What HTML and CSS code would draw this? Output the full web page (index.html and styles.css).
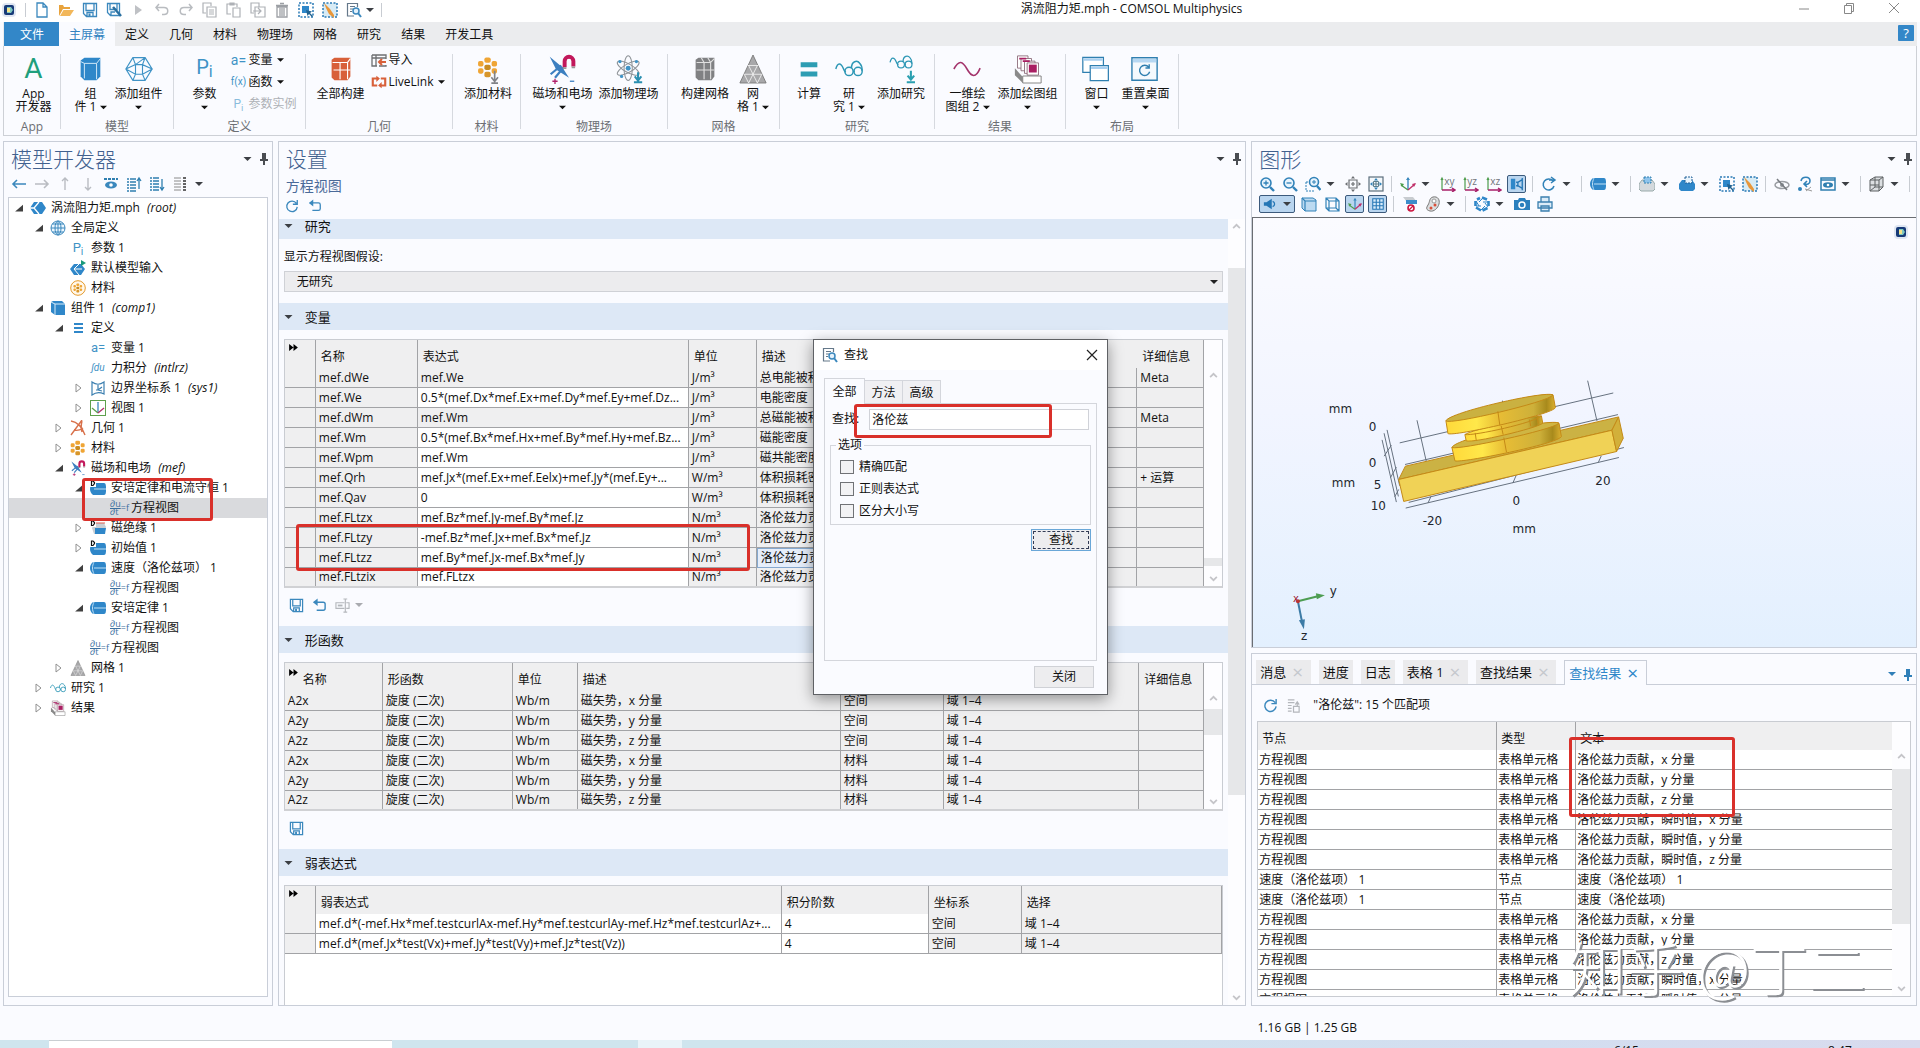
FILE: index.html
```html
<!DOCTYPE html>
<html lang="zh-CN">
<head>
<meta charset="utf-8">
<title>涡流阻力矩.mph - COMSOL Multiphysics</title>
<link rel="stylesheet" href="styles.css">
</head>
<body>
<svg class="sprite" aria-hidden="true">
  <symbol id="down" viewBox="0 0 8 8"><path d="M0 2h8L4 6z" fill="currentColor"/></symbol>
  <symbol id="pin" viewBox="0 0 8 12"><path d="M2 0h4v6h2v2H5v4H3V8H0V6h2z" fill="currentColor"/></symbol>
  <symbol id="chev-up" viewBox="0 0 8 8"><path d="M1 5.500l3-3 3 3" fill="none" stroke="#c4c4c8" stroke-width="1.500"/></symbol>
  <symbol id="chev-down" viewBox="0 0 8 8"><path d="M1 2.500l3 3 3-3" fill="none" stroke="#c4c4c8" stroke-width="1.500"/></symbol>
  <symbol id="open" viewBox="0 0 8 8"><path d="M8 1v6H1z" fill="#404040"/></symbol>
  <symbol id="shut" viewBox="0 0 8 10"><path d="M1.500 1v8L6.500 5z" fill="none" stroke="#909090"/></symbol>
  <symbol id="logo" viewBox="0 0 16 16"><rect x="1" y="1" width="14" height="14" rx="4" fill="#dfe6f2"/><rect x="3" y="3" width="10" height="10" rx="2" fill="#173a78"/><path d="M6 5h4l2 3-2 3H6z" fill="#7fc8c0"/><path d="M6 6h3v4H6z" fill="#f4e38a"/></symbol>
  <symbol id="new" viewBox="0 0 16 16"><path d="M3 1h6l4 4v10H3zM9 1v4h4" fill="none" stroke="#3b88bd" stroke-width="1.300"/></symbol>
  <symbol id="folder" viewBox="0 0 16 16"><path d="M1 14V3h4l1 2h6v2H5z" fill="#e8a33d"/><path d="M5.500 8H16l-4 6H2z" fill="#f2b75a"/></symbol>
  <symbol id="save" viewBox="0 0 16 16"><path d="M1.500 1.500h13v13h-10l-3-3zM4 1.500v7h8v-7M5 14v-3.500h6V14" fill="none" stroke="#3b88bd" stroke-width="1.300"/><path d="M6.500 11.500h2V14h-2z" fill="#3b88bd"/></symbol>
  <symbol id="saveas" viewBox="0 0 16 16"><path d="M1.500 1.500h12v12h-9l-3-3zM4 1.500v6h7v-6M5 13v-3h4" fill="none" stroke="#3b88bd" stroke-width="1.300"/><path d="M7 5l8 9" stroke="#2a6f9f" stroke-width="2.500"/></symbol>
  <symbol id="play" viewBox="0 0 16 16"><path d="M5 3v10l7-5z" fill="#bfc1c5"/></symbol>
  <symbol id="undo" viewBox="0 0 16 16"><path d="M5 2L2 5.500 5 9M2 5.500h8c5 0 5 7 0 7H8" fill="none" stroke="#b9bcc0" stroke-width="1.500"/></symbol>
  <symbol id="redo" viewBox="0 0 16 16"><path d="M11 2l3 3.500L11 9M14 5.500H6c-5 0-5 7 0 7h2" fill="none" stroke="#b9bcc0" stroke-width="1.500"/></symbol>
  <symbol id="copy" viewBox="0 0 16 16"><path d="M4 11H1V1h8v3M5 5h9v10H5zM7 8h5M7 10h5M7 12h5" fill="none" stroke="#aeb1b6" stroke-width="1.200"/></symbol>
  <symbol id="paste" viewBox="0 0 16 16"><path d="M5 12H1V2h10v3M4 1h4v2H4zM7 6h7v9H7z" fill="none" stroke="#aeb1b6" stroke-width="1.200"/></symbol>
  <symbol id="dup" viewBox="0 0 16 16"><path d="M4 11H1V1h8v4M5 5h10v10H5zM3 9h8M8 6l3 3-3 3" fill="none" stroke="#aeb1b6" stroke-width="1.200"/></symbol>
  <symbol id="trash" viewBox="0 0 16 16"><path d="M3 5h10v10H3zM2 3.500h12M6 1.500h4M6 6v8M8 6v8M10 6v8" fill="none" stroke="#9c9fa4" stroke-width="1.300"/></symbol>
  <symbol id="select" viewBox="0 0 16 16"><rect x="1" y="1" width="14" height="14" fill="none" stroke="#2a7ab5" stroke-width="1.500" stroke-dasharray="2 1.500"/><path d="M4 4h7v7H4z" fill="#2f87c9"/><path d="M8 8l6 1.500-2 1.500 3 3-1 1-3-3-1.500 2z" fill="#21628f"/></symbol>
  <symbol id="clear" viewBox="0 0 16 16"><rect x="1" y="1" width="14" height="14" fill="#d7ebf5" stroke="#2a7ab5" stroke-width="1.500" stroke-dasharray="2 1.500"/><path d="M2 1l6 6 4 6v3l-5-4-3-6z" fill="#e8973a"/></symbol>
  <symbol id="find" viewBox="0 0 16 16"><path d="M8 14H1.500V1.500h10V5M4 4.500h5M4 7h3M4 9.500h2" fill="none" stroke="#65788a" stroke-width="1.200"/><circle cx="10" cy="9" r="3" fill="#e4f1fb" stroke="#3b88bd" stroke-width="1.500"/><path d="M12 11l3 4" stroke="#3b88bd" stroke-width="2"/></symbol>
  <symbol id="cube" viewBox="0 0 28 32"><path d="M4 7l4-3h17v20l-4 4H8l-4-4z" fill="#2f87c9"/><path d="M4 8l4 2h13v17M21 10l4-5M8 10v16" fill="none" stroke="#d8ecfa" stroke-width="1"/></symbol>
  <symbol id="addcube" viewBox="0 0 32 32"><path d="M9 3h14l8 13-8 13H9L1 16zM1 16l11-5 11-8M9 3l3 8M12 11h8l11 5-11 6h-8L1 16M12 11v11L9 29M20 11v11l3 7M20 11l3-8" fill="none" stroke="#3f93c6" stroke-width="1.300"/></symbol>
  <symbol id="build" viewBox="0 0 28 32"><path d="M4 6l3-2h17v20l-3 4H7l-3-3z" fill="#d8603a"/><path d="M5 9h16v18M21 9l3-4M13 9v18M6 17h18" fill="none" stroke="#fff" stroke-width="1.200"/></symbol>
  <symbol id="meshcube" viewBox="0 0 28 32"><path d="M4 6l3-2h17v20l-3 4H7l-3-3z" fill="#808183"/><path d="M5 9h15v18M20 9l4-4M13 9v18M5 17h19M10 4l3 5M17 4l3 5" fill="none" stroke="#e0e0e0" stroke-width="1.200"/></symbol>
  <symbol id="mesh" viewBox="0 0 32 34"><path d="M16 1L31 33H1z" fill="#a8a8aa" stroke="#777"/><path d="M6 23h20M10 13h12M6 23l5 10M11 13l10 20M21 13L11 33M26 23l-5 10" stroke="#f0f0f0" fill="none"/></symbol>
  <symbol id="import" viewBox="0 0 16 16"><path d="M1 3h14v4M1 3v11h5M1 6h14M5 3v11M15 13v1H8" fill="none" stroke="#6d6f72" stroke-width="1.300"/><path d="M15 10H8m3-3l-3 3 3 3" fill="none" stroke="#d8603a" stroke-width="2"/></symbol>
  <symbol id="link" viewBox="0 0 18 14"><path d="M8 3H2v8h5M10 11h6V3h-5" fill="none" stroke="#d8603a" stroke-width="2.400"/><path d="M6 0l4 3-4 4zM12 7L8 11l4 3z" fill="#d8603a"/></symbol>
  <symbol id="mat" viewBox="0 0 24 24"><g fill="#efa535"><rect x="8" y="1" width="7" height="6" rx="2"/><rect x="1" y="5" width="6" height="6" rx="2"/><rect x="16" y="5" width="6" height="6" rx="2"/><rect x="8" y="9" width="7" height="6" rx="2" fill="#c98c22"/><rect x="1" y="13" width="6" height="6" rx="2"/><rect x="16" y="13" width="6" height="6" rx="2"/><rect x="8" y="17" width="7" height="6" rx="2" fill="#d8962a"/></g></symbol>
  <symbol id="matadd" viewBox="0 0 32 36"><use href="#mat" x="3" y="3" width="26" height="26"/><path d="M24 20v12m-4-4l4 5 4-5M20 35h8" fill="none" stroke="#808388" stroke-width="2"/></symbol>
  <symbol id="magnet" viewBox="0 0 32 34"><path d="M2 3l12 10 1 0 9 14-14-9-1-1z" fill="#3c7fc0"/><path d="M3 23l12-10M8 27l10-12" stroke="#3c7fc0" stroke-width="2.500"/><path d="M19 15V8a5 5 0 0 1 10 0v6" fill="none" stroke="#c2185b" stroke-width="4.500"/><path d="M17 15h4v2h-4zM27 14h4v2h-4z" fill="#999"/><path d="M5 31h6M8 28v6" stroke="#b0206a" stroke-width="1.500"/><path d="M25 31h5" stroke="#3c7fc0" stroke-width="1.500"/></symbol>
  <symbol id="atom" viewBox="0 0 34 36"><g fill="none" stroke="#8f9499" stroke-width="1.300"><ellipse cx="16" cy="17" rx="5" ry="15"/><ellipse cx="16" cy="17" rx="5" ry="15" transform="rotate(60 16 17)"/><ellipse cx="16" cy="17" rx="5" ry="15" transform="rotate(120 16 17)"/></g><circle cx="16" cy="17" r="3" fill="#3f93c6"/><circle cx="6" cy="9" r="2" fill="#3f93c6"/><circle cx="26" cy="9" r="2" fill="#3f93c6"/><circle cx="8" cy="27" r="2" fill="#3f93c6"/><path d="M28 22v9m-4-4l4 5 4-5M23 34h10" fill="none" stroke="#2a8fb0" stroke-width="2.500"/></symbol>
  <symbol id="equal" viewBox="0 0 24 24"><path d="M2 4h20v6H2zM2 15h20v6H2z" fill="#2d9db3"/></symbol>
  <symbol id="glasses" viewBox="0 0 34 24"><g fill="none" stroke="#2d97b5" stroke-width="1.800"><circle cx="17" cy="15" r="5"/><circle cx="28" cy="15" r="5"/><path d="M1 12c2-8 6-8 9-1 1 3 2 4 3 5M22 15h2M20 11c0-9 7-10 10-6 2 2 3 5 3 9"/></g></symbol>
  <symbol id="glassesadd" viewBox="0 0 34 36"><use href="#glasses" width="34" height="20"/><path d="M29 20v10m-4-4l4 5 4-5M24 34h10" fill="none" stroke="#2a9fb0" stroke-width="2.500"/></symbol>
  <symbol id="sine" viewBox="0 0 32 20"><path d="M1 10C7-1 11 1 16 10s10 11 15-1" fill="none" stroke="#a3336b" stroke-width="1.800"/></symbol>
  <symbol id="plots" viewBox="0 0 32 34"><g stroke="#8a6a78" fill="#fff"><path d="M4 2h12v14H4z"/><path d="M8 5h12v14H8z"/><path d="M12 8h12v14H12z"/><path d="M15 10h13v14H15z"/></g><path d="M17 12h9v9h-9z" fill="#a91e62"/><path d="M6 4h8v2H6zM10 7h8v2h-8z" fill="#a91e62"/><path d="M1 16l9 10v7L1 24z" fill="#8a8a8a"/><path d="M10 25h21v8H10z" fill="#fff" stroke="#777"/></symbol>
  <symbol id="wins" viewBox="0 0 34 32"><g fill="#fff" stroke="#2f7fb0" stroke-width="1.500"><path d="M1 2h25v18H1z"/><path d="M10 12h22v18H10z"/></g><path d="M2 3h23v3H2zM11 13h20v3H11z" fill="#a9d0f0"/></symbol>
  <symbol id="reset" viewBox="0 0 30 28"><path d="M1 2h27v24H1z" fill="#f4f9fd" stroke="#2f7fb0" stroke-width="1.500"/><path d="M2 3h25v4H2z" fill="#b5d7f2"/><path d="M19 12a5.500 5.500 0 1 0 1 5M19.500 9v4h-4" fill="none" stroke="#2f7fb0" stroke-width="1.500"/></symbol>
  <symbol id="left" viewBox="0 0 16 16"><path d="M15 8H2m4-4L2 8l4 4" fill="none" stroke="currentColor" stroke-width="1.600"/></symbol>
  <symbol id="right" viewBox="0 0 16 16"><path d="M1 8h13m-4-4l4 4-4 4" fill="none" stroke="currentColor" stroke-width="1.600"/></symbol>
  <symbol id="up" viewBox="0 0 16 16"><path d="M8 14V2M5 5l3-3 3 3" fill="none" stroke="currentColor" stroke-width="1.400"/></symbol>
  <symbol id="dn" viewBox="0 0 16 16"><path d="M8 2v12m-3-3l3 3 3-3" fill="none" stroke="currentColor" stroke-width="1.400"/></symbol>
  <symbol id="eye" viewBox="0 0 16 16"><path d="M1 3h14" stroke="#2f7fb0" stroke-width="2" stroke-dasharray="3 1"/><ellipse cx="8" cy="9" rx="6" ry="3.500" fill="#3b88bd"/><circle cx="8" cy="9" r="1.800" fill="#fff"/></symbol>
  <symbol id="listup" viewBox="0 0 16 16"><path d="M1 3h9M1 6h9M1 9h9M1 12h9M1 15h9" stroke="#2f7fb0" stroke-width="1.300" stroke-dasharray="2 1 6 0"/><path d="M13 13V2m-2 3l2-3 2 3" fill="none" stroke="#2f7fb0" stroke-width="1.300"/></symbol>
  <symbol id="listdn" viewBox="0 0 16 16"><path d="M1 2h9M1 5h9M1 8h9M1 11h9M1 14h9" stroke="#2f7fb0" stroke-width="1.300" stroke-dasharray="2 1 6 0"/><path d="M13 3v11m-2-3l2 3 2-3" fill="none" stroke="#2f7fb0" stroke-width="1.300"/></symbol>
  <symbol id="list" viewBox="0 0 16 16"><path d="M2 2h7M2 5h7M2 8h7M2 11h7M2 14h7" stroke="#8a8a8a"/><path d="M11 2h3M11 5h3M11 8h3M11 11h3M11 14h3" stroke="#333" stroke-width="1.500"/></symbol>
  <symbol id="root" viewBox="0 0 16 16"><path d="M4 2h8l4 6-4 6H4L0 8z" fill="#2f87c9"/><path d="M9 2L4 8l5 6M4 8h-4" stroke="#fff" stroke-width="1.300" fill="none"/></symbol>
  <symbol id="input" viewBox="0 0 16 16"><path d="M4 4h7l4 5-4 6H4L0 9z" fill="#2f87c9"/><path d="M9 4L4 9l5 6M4 9h8" stroke="#fff" fill="none"/><path d="M11 0l5 3-5 3z" fill="#1a9a7b"/></symbol>
  <symbol id="globe" viewBox="0 0 16 16"><g fill="#eaf5fd" stroke="#3b88bd"><circle cx="8" cy="8" r="7"/><ellipse cx="8" cy="8" rx="3" ry="7"/><path d="M1 8h14M8 1v14M2.500 4h11M2.500 12h11"/></g></symbol>
  <symbol id="matring" viewBox="0 0 16 16"><circle cx="8" cy="8" r="7.300" fill="#fff8ec" stroke="#e59a2c"/><use href="#mat" x="3" y="3" width="10" height="10"/></symbol>
  <symbol id="cubes" viewBox="0 0 16 16"><path d="M1 2l2-1h9l3 3v11H5l-4-3z" fill="#2f87c9"/><path d="M1 2l4 2h10M5 4v11" stroke="#d8ecfa" fill="none"/></symbol>
  <symbol id="defs" viewBox="0 0 16 16"><path d="M4 4h9M4 8h9M4 12h9" stroke="#2f87c9" stroke-width="2"/></symbol>
  <symbol id="coord" viewBox="0 0 16 16"><path d="M2 2c4 3 8 3 12 0v12c-4-2-8-2-12 1zM8 5v5H6M8 10l4-3M8 10l4 1" fill="none" stroke="#3b7fb0" stroke-width="1.200"/></symbol>
  <symbol id="view" viewBox="0 0 16 16"><rect x=".5" y=".5" width="15" height="15" fill="#fff" stroke="#5ea04c"/><path d="M8 2v11" stroke="#3b88bd" stroke-width="1.300"/><path d="M8 13L2 8" stroke="#5ea04c" stroke-width="1.300"/><path d="M8 13l6-5" stroke="#b0306a" stroke-width="1.300"/></symbol>
  <symbol id="geom" viewBox="0 0 16 16"><path d="M1 1c7 1 11 6 14 14M12 0L1 15M12 1c-1 4-1 8 0 11M4 10c3 1 6 0 9-2" fill="none" stroke="#d8704a" stroke-width="1.400"/></symbol>
  <symbol id="dom" viewBox="0 0 16 16"><path d="M3 2h11c2 0 2 3 2 6s0 6-2 6H3c-4-3-4-9 0-12z" fill="#2f87c9"/><path d="M4 2c-2 4-2 8 0 12M4 8h12" stroke="#bfe0f6" fill="none"/></symbol>
  <symbol id="domd" viewBox="0 0 16 16"><path d="M3 3h11c2 0 2 3 2 6s0 6-2 6H3c-4-3-4-9 0-12z" fill="#2f87c9"/><path d="M4 9h12" stroke="#bfe0f6"/><path d="M0 0h6v7H0z" fill="#fff"/><path d="M1.500 1H3l1.500 1.500v1L3 5.500H1.500z" fill="none" stroke="#111" stroke-width="1.200"/></symbol>
  <symbol id="domi" viewBox="0 0 16 16"><path d="M5 3h9l2 4-2 7H4L2 8z" fill="#c9ced4"/><path d="M5 8h11l-1 6H5z" fill="#2f87c9"/><path d="M5 3h10" stroke="#e06050"/><path d="M0 0h6v7H0z" fill="#fff"/><path d="M1.500 1H3l1.500 1.500v1L3 5.500H1.500z" fill="none" stroke="#111" stroke-width="1.200"/></symbol>
  <symbol id="refresh" viewBox="0 0 16 16"><path d="M13 5a6 6 0 1 0 1 4M14 1v5H9" fill="none" stroke="#3b88bd" stroke-width="1.500"/></symbol>
  <symbol id="back" viewBox="0 0 16 16"><path d="M2 4.500h10a2 2 0 0 1 2 2V11a2 2 0 0 1-2 2H5" fill="none" stroke="#3b88bd" stroke-width="1.500"/><path d="M1 4.500l5-4v8z" fill="#3b88bd"/></symbol>
  <symbol id="rename" viewBox="0 0 16 16"><path d="M10 5H1v6h9M12 5h3v6h-3M11 1v14M9 1h4M9 15h4" fill="none" stroke="#b4b7bc" stroke-width="1.200"/><path d="M3 7h5v2H3z" fill="#b4b7bc"/></symbol>
  <symbol id="ff" viewBox="0 0 10 8"><path d="M0 0l5 4-5 4zM5 0l5 4-5 4z" fill="#000"/></symbol>
  <symbol id="zin" viewBox="0 0 16 16"><circle cx="7" cy="7" r="5" fill="#e8f4fd" stroke="#3182b8" stroke-width="1.600"/><path d="M11 11l4 4" stroke="#3182b8" stroke-width="2.400"/><path d="M4.500 7h5M7 4.500v5" stroke="#3182b8" stroke-width="1.300"/></symbol>
  <symbol id="zout" viewBox="0 0 16 16"><circle cx="7" cy="7" r="5" fill="#e8f4fd" stroke="#3182b8" stroke-width="1.600"/><path d="M11 11l4 4" stroke="#3182b8" stroke-width="2.400"/><path d="M4.500 7h5" stroke="#3182b8" stroke-width="1.300"/></symbol>
  <symbol id="zbox" viewBox="0 0 16 16"><path d="M1 6v9h9M1 6h2" fill="none" stroke="#3182b8" stroke-dasharray="2 1"/><circle cx="9" cy="6" r="4.500" fill="#e8f4fd" stroke="#3182b8" stroke-width="1.600"/><path d="M12 10l3.500 4" stroke="#3182b8" stroke-width="2.400"/><path d="M7 6h4M9 4v4" stroke="#3182b8"/></symbol>
  <symbol id="ext" viewBox="0 0 16 16"><path d="M4 4h8v8H4zM8 6v4M6 8h4" fill="none" stroke="#6b6e72" stroke-width="1.200"/><path d="M8 0l2 2.500H6zM8 16l2-2.500H6zM0 8l2.500-2v4zM16 8l-2.500-2v4z" fill="#6b6e72"/></symbol>
  <symbol id="fit" viewBox="0 0 16 16"><rect x="1" y="1" width="14" height="14" fill="#f4f8fb" stroke="#5b6e7c" stroke-width="1.200"/><path d="M5.500 5.500h5v5h-5zM8 6v4M6 8h4" fill="none" stroke="#5b7e8c"/><path d="M8 2l2 2.500H6zM8 14l2-2.500H6zM2 8l2.500-2v4zM14 8l-2.500-2v4z" fill="#3182b8"/></symbol>
  <symbol id="axes" viewBox="0 0 16 16"><path d="M8 2v12" stroke="#3b88bd" stroke-width="1.400"/><path d="M8 14L1 9" stroke="#4c9c4c" stroke-width="1.400"/><path d="M8 14l7-6" stroke="#c0306a" stroke-width="1.400"/><path d="M6 4l2-3 2 3z" fill="#3b88bd"/><path d="M0 7l4 1-2 3z" fill="#4c9c4c"/><path d="M16 7l-4 1 2 3z" fill="#c0306a"/></symbol>
  <symbol id="plane" viewBox="0 0 16 16"><path d="M2 14V2M1 4l1-2 1 2" fill="none" stroke="#4c9c4c" stroke-width="1.200"/><path d="M2 14h13m-3-2l3 2-3 2" fill="none" stroke="#a8206a" stroke-width="1.400"/></symbol>
  <symbol id="iso" viewBox="0 0 16 16"><path d="M1 2h5v12H1z" fill="#2f87c9"/><path d="M14 1v14M7 6h2l5-3M7 10h2l5 3M9 5v6" stroke="#2476b5" fill="none" stroke-width="1.500"/></symbol>
  <symbol id="rot" viewBox="0 0 16 16"><path d="M12 5a5.500 5.500 0 1 0 1 5M8 4h5M10 1l4 3-4 3" fill="none" stroke="#3182b8" stroke-width="1.500"/></symbol>
  <symbol id="hidea" viewBox="0 0 16 16"><path d="M3 4h10l3 4v5l-2 2H2l-2-2V8z" fill="#d4d9dd" stroke="#9aa"/><rect x="5" y="1" width="7" height="6" fill="#8fc4ec" stroke="#2f7fb0" stroke-dasharray="2 1"/></symbol>
  <symbol id="hideb" viewBox="0 0 16 16"><path d="M3 4h10l3 4v5l-2 2H2l-2-2V8z" fill="#2f87c9"/><rect x="6" y="1" width="7" height="6" fill="#e8f4fd" stroke="#1f5f96" stroke-dasharray="2 1"/></symbol>
  <symbol id="noeye" viewBox="0 0 16 16"><ellipse cx="8" cy="9" rx="7" ry="3.500" fill="none" stroke="#9a9da2" stroke-width="1.500"/><circle cx="8" cy="9" r="2" fill="#8d9196"/><path d="M3 3l10 11" stroke="#777b80" stroke-width="1.500"/></symbol>
  <symbol id="rsteye" viewBox="0 0 16 16"><path d="M4 5c1-5 9-5 9 0 0 3-3 4-6 3M10 5L7 8l3 3" fill="none" stroke="#3182b8" stroke-width="1.600"/><circle cx="3" cy="13" r="2" fill="#3182b8"/><path d="M8 13l7 2M14 11l-5 4" stroke="#999"/></symbol>
  <symbol id="eyebox" viewBox="0 0 16 16"><path d="M1 2h14v12H1zM1 4h14" fill="none" stroke="#2f7fb0" stroke-width="1.500"/><ellipse cx="8" cy="9" rx="5" ry="2.800" fill="#2f7fb0"/><circle cx="8" cy="9" r="1.300" fill="#fff"/></symbol>
  <symbol id="wire" viewBox="0 0 16 16"><path d="M1 4l5-3h8v10l-4 4H1zM1 4h9v11M10 4l4-3M6 1v10M6 11l-5 4M6 11h8M1 9h9" fill="#dcdfe2" stroke="#5d6063"/></symbol>
  <symbol id="horn" viewBox="0 0 16 16"><path d="M1 6h3l6-4v12l-6-4H1z" fill="#2476b5"/><path d="M11 5c3 1 3 5 0 6" fill="none" stroke="#2476b5" stroke-width="1.500"/></symbol>
  <symbol id="box" viewBox="0 0 16 16"><path d="M1 2h11l3 2v11H4l-3-3z" fill="#bcdaf1" stroke="#3182b8"/><path d="M1 2l3 3h11M4 5v10" stroke="#3182b8" stroke-width="1.200" fill="none"/></symbol>
  <symbol id="boxw" viewBox="0 0 16 16"><path d="M2 2h10l3 3v10H5l-3-3zM2 2l3 3h10M5 5v10M12 2v10H2M12 12l3 3" fill="none" stroke="#3182b8" stroke-width="1.200"/></symbol>
  <symbol id="grid" viewBox="0 0 16 16"><path d="M2 2h12v12H2zM6 2v12M10 2v12M2 6h12M2 10h12" fill="#d6eafa" stroke="#2476b5" stroke-width="1.200"/></symbol>
  <symbol id="nocolor" viewBox="0 0 16 16"><path d="M1 1h10l4 5H5z" fill="#c8ccd0"/><path d="M4 4h11v4H4z" fill="#3c8dca"/><circle cx="9" cy="12" r="3" fill="#fff" stroke="#cc1740" stroke-width="1.600"/><path d="M7 14l4-4" stroke="#cc1740" stroke-width="1.300"/></symbol>
  <symbol id="palette" viewBox="0 0 16 16"><path d="M8 1c5-1 7 3 6 7s-5 8-9 7-4-3-2-6 1-7 5-8z" fill="#dcdedf" stroke="#777"/><circle cx="9" cy="5" r="2" fill="#fff" stroke="#999"/><circle cx="10" cy="9" r="1.500" fill="#d8503a"/><circle cx="6" cy="12" r="1.500" fill="#d8503a"/></symbol>
  <symbol id="shutter" viewBox="0 0 16 16"><g fill="none" stroke="#2f87c9" stroke-width="2.600"><path d="M8 1.500l5 2M14.500 5v5M13.500 12l-5 2.500M7 14.500l-5-3M1.500 10V5M3 3.500L6 2"/></g><path d="M9 2l-4 4M14 6H9M14 11l-3-4M7 14l4-4M2 10h5M2 5l3 5" stroke="#2f87c9"/></symbol>
  <symbol id="camera" viewBox="0 0 16 16"><path d="M0 4h4l1-2h6l1 2h4v10H0z" fill="#2a7fbd"/><circle cx="8" cy="9" r="3" fill="none" stroke="#fff" stroke-width="1.500"/></symbol>
  <symbol id="print" viewBox="0 0 16 16"><path d="M4 6V1h8v5M1 6h14v6H1zM4 10h8v5H4z" fill="#dcecf8" stroke="#3b7fae" stroke-width="1.300"/></symbol>
  <symbol id="tablenew" viewBox="0 0 16 16"><path d="M2 2h7M2 5h7M2 8h4M2 11h4M2 14h4M8 9h6v6H8zM12 4v5m-2-2l2-3 2 3" fill="none" stroke="#b4b7bc" stroke-width="1.300"/></symbol>
</svg>

<header class="titlebar">
  <div class="quick">
    <svg class="i"><use href="#logo"/></svg><span class="bar"></span>
    <button aria-label="新建"><svg class="i"><use href="#new"/></svg></button>
    <button aria-label="打开"><svg class="i"><use href="#folder"/></svg></button>
    <button aria-label="保存"><svg class="i"><use href="#save"/></svg></button>
    <button aria-label="另存为"><svg class="i"><use href="#saveas"/></svg></button>
    <button aria-label="运行"><svg class="i"><use href="#play"/></svg></button>
    <button aria-label="撤消"><svg class="i"><use href="#undo"/></svg></button>
    <button aria-label="重做"><svg class="i"><use href="#redo"/></svg></button>
    <button aria-label="复制"><svg class="i"><use href="#copy"/></svg></button>
    <button aria-label="粘贴"><svg class="i"><use href="#paste"/></svg></button>
    <button aria-label="生成副本"><svg class="i"><use href="#dup"/></svg></button>
    <button aria-label="删除"><svg class="i"><use href="#trash"/></svg></button>
    <button aria-label="选择"><svg class="i"><use href="#select"/></svg></button>
    <button aria-label="清除选择"><svg class="i"><use href="#clear"/></svg></button>
    <button aria-label="查找"><svg class="i"><use href="#find"/></svg></button>
    <svg class="a"><use href="#down"/></svg><span class="bar"></span>
  </div>
  <h1>涡流阻力矩.mph - COMSOL Multiphysics</h1>
  <div class="winbtns">
    <button aria-label="最小化"><svg viewBox="0 0 12 12"><path d="M1 7h10" stroke="#888"/></svg></button>
    <button aria-label="还原"><svg viewBox="0 0 12 12"><path d="M1.500 3.500h7v8h-7zM3.500 3.500v-2h7v8h-2" fill="none" stroke="#888"/></svg></button>
    <button aria-label="关闭窗口"><svg viewBox="0 0 12 12"><path d="M1 1l10 10M11 1L1 11" stroke="#888"/></svg></button>
  </div>
</header>

<nav class="tabs">
  <button class="file">文件</button><button class="on">主屏幕</button><button>定义</button><button>几何</button><button>材料</button><button>物理场</button><button>网格</button><button>研究</button><button>结果</button><button>开发工具</button>
  <button class="help" aria-label="帮助">?</button>
</nav>

<section class="ribbon">
  <div class="group g-app"><div class="cmds"><button class="cmd"><span class="pic glyph-a">A</span><span>App<br>开发器</span></button></div><p>App</p></div>
  <div class="group g-model"><div class="cmds">
    <button class="cmd"><svg class="pic"><use href="#cube"/></svg><span>组<br>件 1 <svg class="a"><use href="#down"/></svg></span></button>
    <button class="cmd"><svg class="pic"><use href="#addcube"/></svg><span>添加组件<br><svg class="a"><use href="#down"/></svg></span></button></div><p>模型</p></div>
  <div class="group g-def"><div class="cmds">
    <button class="cmd"><span class="pic glyph-p">P<sub>i</sub></span><span>参数<br><svg class="a"><use href="#down"/></svg></span></button>
    <div class="stack">
      <button><span class="sym">a=</span>变量 <svg class="a"><use href="#down"/></svg></button>
      <button><span class="sym fx">f(x)</span>函数 <svg class="a"><use href="#down"/></svg></button>
      <button class="off" disabled><span class="sym">P<sub>i</sub></span>参数实例</button>
    </div></div><p>定义</p></div>
  <div class="group g-geom"><div class="cmds">
    <button class="cmd"><svg class="pic"><use href="#build"/></svg><span>全部构建</span></button>
    <div class="stack">
      <button><svg class="i"><use href="#import"/></svg>导入</button>
      <button><svg class="i"><use href="#link"/></svg>LiveLink <svg class="a"><use href="#down"/></svg></button>
    </div></div><p>几何</p></div>
  <div class="group g-mat"><div class="cmds"><button class="cmd"><svg class="pic"><use href="#matadd"/></svg><span>添加材料</span></button></div><p>材料</p></div>
  <div class="group g-phys"><div class="cmds">
    <button class="cmd"><svg class="pic"><use href="#magnet"/></svg><span>磁场和电场<br><svg class="a"><use href="#down"/></svg></span></button>
    <button class="cmd"><svg class="pic"><use href="#atom"/></svg><span>添加物理场</span></button></div><p>物理场</p></div>
  <div class="group g-mesh"><div class="cmds">
    <button class="cmd"><svg class="pic"><use href="#meshcube"/></svg><span>构建网格</span></button>
    <button class="cmd"><svg class="pic"><use href="#mesh"/></svg><span>网<br>格 1 <svg class="a"><use href="#down"/></svg></span></button></div><p>网格</p></div>
  <div class="group g-study"><div class="cmds">
    <button class="cmd"><svg class="pic small"><use href="#equal"/></svg><span>计算</span></button>
    <button class="cmd"><svg class="pic"><use href="#glasses"/></svg><span>研<br>究 1 <svg class="a"><use href="#down"/></svg></span></button>
    <button class="cmd"><svg class="pic"><use href="#glassesadd"/></svg><span>添加研究</span></button></div><p>研究</p></div>
  <div class="group g-res"><div class="cmds">
    <button class="cmd"><svg class="pic"><use href="#sine"/></svg><span>一维绘<br>图组 2 <svg class="a"><use href="#down"/></svg></span></button>
    <button class="cmd"><svg class="pic"><use href="#plots"/></svg><span>添加绘图组<br><svg class="a"><use href="#down"/></svg></span></button></div><p>结果</p></div>
  <div class="group g-lay"><div class="cmds">
    <button class="cmd"><svg class="pic"><use href="#wins"/></svg><span>窗口<br><svg class="a"><use href="#down"/></svg></span></button>
    <button class="cmd"><svg class="pic"><use href="#reset"/></svg><span>重置桌面<br><svg class="a"><use href="#down"/></svg></span></button></div><p>布局</p></div>
</section>

<main class="desk">
  <section class="panel builder">
    <div class="phead"><h2>模型开发器</h2><svg class="a"><use href="#down"/></svg><svg class="pin"><use href="#pin"/></svg></div>
    <div class="tools nav">
      <button aria-label="后退" class="blue"><svg class="i"><use href="#left"/></svg></button>
      <button aria-label="前进" class="grey"><svg class="i"><use href="#right"/></svg></button>
      <button aria-label="上移" class="grey"><svg class="i"><use href="#up"/></svg></button>
      <button aria-label="下移" class="grey"><svg class="i"><use href="#dn"/></svg></button>
      <button aria-label="显示"><svg class="i"><use href="#eye"/></svg></button>
      <button aria-label="折叠"><svg class="i"><use href="#listup"/></svg></button>
      <button aria-label="展开"><svg class="i"><use href="#listdn"/></svg></button>
      <button aria-label="节点文本"><svg class="i"><use href="#list"/></svg></button>
      <svg class="a"><use href="#down"/></svg>
    </div>
    <ul class="tree">
      <li class="l0"><svg class="x"><use href="#open"/></svg><svg class="i"><use href="#root"/></svg><span>涡流阻力矩.mph <i>(root)</i></span></li>
      <li class="l1"><svg class="x"><use href="#open"/></svg><svg class="i"><use href="#globe"/></svg><span>全局定义</span></li>
      <li class="l2"><b class="x"></b><b class="i sym">P<sub>i</sub></b><span>参数 1</span></li>
      <li class="l2"><b class="x"></b><svg class="i"><use href="#input"/></svg><span>默认模型输入</span></li>
      <li class="l2"><b class="x"></b><svg class="i"><use href="#matring"/></svg><span>材料</span></li>
      <li class="l1"><svg class="x"><use href="#open"/></svg><svg class="i"><use href="#cubes"/></svg><span>组件 1 <i>(comp1)</i></span></li>
      <li class="l2"><svg class="x"><use href="#open"/></svg><svg class="i"><use href="#defs"/></svg><span>定义</span></li>
      <li class="l3"><b class="x"></b><b class="i sym">a=</b><span>变量 1</span></li>
      <li class="l3"><b class="x"></b><b class="i sym du">∫du</b><span>力积分 <i>(intlrz)</i></span></li>
      <li class="l3"><svg class="x"><use href="#shut"/></svg><svg class="i"><use href="#coord"/></svg><span>边界坐标系 1 <i>(sys1)</i></span></li>
      <li class="l3"><svg class="x"><use href="#shut"/></svg><svg class="i"><use href="#view"/></svg><span>视图 1</span></li>
      <li class="l2"><svg class="x"><use href="#shut"/></svg><svg class="i"><use href="#geom"/></svg><span>几何 1</span></li>
      <li class="l2"><svg class="x"><use href="#shut"/></svg><svg class="i"><use href="#mat"/></svg><span>材料</span></li>
      <li class="l2"><svg class="x"><use href="#open"/></svg><svg class="i"><use href="#magnet"/></svg><span>磁场和电场 <i>(mef)</i></span></li>
      <li class="l3"><svg class="x"><use href="#open"/></svg><svg class="i"><use href="#domd"/></svg><span>安培定律和电流守恒 1</span></li>
      <li class="l4 sel"><b class="x"></b><b class="i eq"><span><u>∂u</u><br>∂t</span>=f</b><span>方程视图</span><em class="mark mark-node"></em></li>
      <li class="l3"><svg class="x"><use href="#shut"/></svg><svg class="i"><use href="#domi"/></svg><span>磁绝缘 1</span></li>
      <li class="l3"><svg class="x"><use href="#shut"/></svg><svg class="i"><use href="#domd"/></svg><span>初始值 1</span></li>
      <li class="l3"><svg class="x"><use href="#open"/></svg><svg class="i"><use href="#dom"/></svg><span>速度（洛伦兹项） 1</span></li>
      <li class="l4"><b class="x"></b><b class="i eq"><span><u>∂u</u><br>∂t</span>=f</b><span>方程视图</span></li>
      <li class="l3"><svg class="x"><use href="#open"/></svg><svg class="i"><use href="#dom"/></svg><span>安培定律 1</span></li>
      <li class="l4"><b class="x"></b><b class="i eq"><span><u>∂u</u><br>∂t</span>=f</b><span>方程视图</span></li>
      <li class="l3"><b class="x"></b><b class="i eq"><span><u>∂u</u><br>∂t</span>=f</b><span>方程视图</span></li>
      <li class="l2"><svg class="x"><use href="#shut"/></svg><svg class="i"><use href="#mesh"/></svg><span>网格 1</span></li>
      <li class="l1"><svg class="x"><use href="#shut"/></svg><svg class="i"><use href="#glasses"/></svg><span>研究 1</span></li>
      <li class="l1"><svg class="x"><use href="#shut"/></svg><svg class="i"><use href="#plots"/></svg><span>结果</span></li>
    </ul>
  </section>

  <section class="panel settings">
    <div class="phead"><h2>设置</h2><svg class="a"><use href="#down"/></svg><svg class="pin"><use href="#pin"/></svg></div>
    <h3>方程视图</h3>
    <div class="tools mini"><button aria-label="刷新"><svg class="i"><use href="#refresh"/></svg></button><button aria-label="还原设置"><svg class="i"><use href="#back"/></svg></button></div>
    <div class="scroller">
      <div class="form">
        <h4><svg class="a"><use href="#down"/></svg>研究</h4>
        <div class="body study">
          <label for="study">显示方程视图假设:</label>
          <div class="combo"><select id="study"><option>无研究</option></select><svg class="a"><use href="#down"/></svg></div>
        </div>
        <h4><svg class="a"><use href="#down"/></svg>变量</h4>
        <div class="body">
          <div class="gridbox">
            <table class="vars">
              <colgroup><col class="w31"><col class="w102"><col class="w271"><col class="w68"><col class="w230"><col><col class="w67"></colgroup>
              <thead><tr><th class="ff"><svg><use href="#ff"/></svg></th><th>名称</th><th>表达式</th><th>单位</th><th>描述</th><th class="nb"></th><th>详细信息</th></tr></thead>
              <tbody>
              <tr><td></td><td>mef.dWe</td><td>mef.We</td><td>J/m³</td><td>总电能被积函数</td><td></td><td>Meta</td></tr>
              <tr><td></td><td>mef.We</td><td class="w">0.5*(mef.Dx*mef.Ex+mef.Dy*mef.Ey+mef.Dz...</td><td>J/m³</td><td>电能密度</td><td></td><td></td></tr>
              <tr><td></td><td>mef.dWm</td><td>mef.Wm</td><td>J/m³</td><td>总磁能被积函数</td><td></td><td>Meta</td></tr>
              <tr><td></td><td>mef.Wm</td><td class="w">0.5*(mef.Bx*mef.Hx+mef.By*mef.Hy+mef.Bz...</td><td>J/m³</td><td>磁能密度</td><td></td><td></td></tr>
              <tr><td></td><td>mef.Wpm</td><td class="w">mef.Wm</td><td>J/m³</td><td>磁共能密度</td><td></td><td></td></tr>
              <tr><td></td><td>mef.Qrh</td><td class="w">mef.Jx*(mef.Ex+mef.Eelx)+mef.Jy*(mef.Ey+...</td><td>W/m³</td><td>体积损耗密度，电</td><td></td><td>+ 运算</td></tr>
              <tr><td></td><td>mef.Qav</td><td class="w">0</td><td>W/m³</td><td>体积损耗密度，磁</td><td></td><td></td></tr>
              <tr><td></td><td>mef.FLtzx</td><td class="w">mef.Bz*mef.Jy-mef.By*mef.Jz</td><td>N/m³</td><td>洛伦兹力贡献，x 分量</td><td></td><td></td></tr>
              <tr><td></td><td>mef.FLtzy</td><td class="w">-mef.Bz*mef.Jx+mef.Bx*mef.Jz</td><td>N/m³</td><td>洛伦兹力贡献，y 分量</td><td></td><td></td></tr>
              <tr><td></td><td>mef.FLtzz</td><td class="w">mef.By*mef.Jx-mef.Bx*mef.Jy</td><td>N/m³</td><td class="cur">洛伦兹力贡献，z 分量</td><td></td><td></td></tr>
              <tr><td></td><td>mef.FLtzix</td><td class="w">mef.FLtzx</td><td>N/m³</td><td>洛伦兹力贡献，瞬时值，x 分量</td><td></td><td></td></tr>
              </tbody>
            </table>
            <div class="sb low"><svg><use href="#chev-up"/></svg><span></span><svg><use href="#chev-down"/></svg></div>
            <em class="mark mark-vars"></em>
          </div>
          <div class="tools under"><button aria-label="保存变量"><svg class="i"><use href="#save"/></svg></button><button aria-label="重置变量"><svg class="i"><use href="#back"/></svg></button><button aria-label="重命名" disabled><svg class="i"><use href="#rename"/></svg></button><svg class="a faint"><use href="#down"/></svg></div>
        </div>
        <h4><svg class="a"><use href="#down"/></svg>形函数</h4>
        <div class="body">
          <div class="gridbox">
            <table class="shape">
              <colgroup><col class="w98"><col class="w130"><col class="w65"><col class="w263"><col class="w103"><col><col class="w65"></colgroup>
              <thead><tr><th class="ff"><svg><use href="#ff"/></svg>名称</th><th>形函数</th><th>单位</th><th>描述</th><th>坐标系</th><th>选择</th><th>详细信息</th></tr></thead>
              <tbody>
              <tr><td>A2x</td><td>旋度 (二次)</td><td>Wb/m</td><td>磁矢势，x 分量</td><td>空间</td><td>域 1–4</td><td></td></tr>
              <tr><td>A2y</td><td>旋度 (二次)</td><td>Wb/m</td><td>磁矢势，y 分量</td><td>空间</td><td>域 1–4</td><td></td></tr>
              <tr><td>A2z</td><td>旋度 (二次)</td><td>Wb/m</td><td>磁矢势，z 分量</td><td>空间</td><td>域 1–4</td><td></td></tr>
              <tr><td>A2x</td><td>旋度 (二次)</td><td>Wb/m</td><td>磁矢势，x 分量</td><td>材料</td><td>域 1–4</td><td></td></tr>
              <tr><td>A2y</td><td>旋度 (二次)</td><td>Wb/m</td><td>磁矢势，y 分量</td><td>材料</td><td>域 1–4</td><td></td></tr>
              <tr><td>A2z</td><td>旋度 (二次)</td><td>Wb/m</td><td>磁矢势，z 分量</td><td>材料</td><td>域 1–4</td><td></td></tr>
              </tbody>
            </table>
            <div class="sb high"><svg><use href="#chev-up"/></svg><span></span><svg><use href="#chev-down"/></svg></div>
          </div>
          <div class="tools under"><button aria-label="保存形函数"><svg class="i"><use href="#save"/></svg></button></div>
        </div>
        <h4><svg class="a"><use href="#down"/></svg>弱表达式</h4>
        <div class="body last">
          <div class="gridbox tall">
            <table class="weak">
              <colgroup><col class="w31"><col class="w466"><col class="w147"><col class="w93"><col></colgroup>
              <thead><tr><th class="ff"><svg><use href="#ff"/></svg></th><th>弱表达式</th><th>积分阶数</th><th>坐标系</th><th>选择</th></tr></thead>
              <tbody>
              <tr><td></td><td class="w">mef.d*(-mef.Hx*mef.testcurlAx-mef.Hy*mef.testcurlAy-mef.Hz*mef.testcurlAz+...</td><td class="w">4</td><td>空间</td><td>域 1–4</td></tr>
              <tr><td></td><td class="w">mef.d*(mef.Jx*test(Vx)+mef.Jy*test(Vy)+mef.Jz*test(Vz))</td><td class="w">4</td><td>空间</td><td>域 1–4</td></tr>
              </tbody>
            </table>
          </div>
        </div>
      </div>
      <div class="sb main"><svg><use href="#chev-up"/></svg><span></span><svg><use href="#chev-down"/></svg></div>
    </div>
  </section>

  <div class="rightcol">
    <section class="panel graphics">
      <div class="phead"><h2>图形</h2><svg class="a"><use href="#down"/></svg><svg class="pin"><use href="#pin"/></svg></div>
      <div class="tools gfx">
        <button aria-label="放大"><svg class="i"><use href="#zin"/></svg></button><button aria-label="缩小"><svg class="i"><use href="#zout"/></svg></button><button aria-label="缩放框"><svg class="i"><use href="#zbox"/></svg></button><svg class="a"><use href="#down"/></svg>
        <button aria-label="缩放到选定"><svg class="i"><use href="#ext"/></svg></button><button aria-label="缩放到窗口"><svg class="i"><use href="#fit"/></svg></button><span class="bar"></span>
        <button aria-label="默认视图"><svg class="i"><use href="#axes"/></svg></button><svg class="a"><use href="#down"/></svg>
        <button class="pl"><svg class="i"><use href="#plane"/></svg><span>xy</span></button><button class="pl"><svg class="i"><use href="#plane"/></svg><span>yz</span></button><button class="pl"><svg class="i"><use href="#plane"/></svg><span>xz</span></button>
        <button class="press" aria-label="投影"><svg class="i"><use href="#iso"/></svg></button><span class="bar"></span>
        <button aria-label="旋转"><svg class="i"><use href="#rot"/></svg></button><svg class="a"><use href="#down"/></svg><span class="bar"></span>
        <button aria-label="选择域"><svg class="i"><use href="#dom"/></svg></button><svg class="a"><use href="#down"/></svg><span class="bar"></span>
        <button aria-label="框选"><svg class="i"><use href="#hidea"/></svg></button><svg class="a"><use href="#down"/></svg>
        <button aria-label="选择对象"><svg class="i"><use href="#hideb"/></svg></button><svg class="a"><use href="#down"/></svg>
        <button aria-label="选择全部"><svg class="i"><use href="#select"/></svg></button><button aria-label="取消选择"><svg class="i"><use href="#clear"/></svg></button><span class="bar"></span>
        <button aria-label="隐藏"><svg class="i"><use href="#noeye"/></svg></button><button aria-label="重置隐藏"><svg class="i"><use href="#rsteye"/></svg></button><button aria-label="可见性"><svg class="i"><use href="#eyebox"/></svg></button><svg class="a"><use href="#down"/></svg><span class="bar"></span>
        <button aria-label="裁剪"><svg class="i"><use href="#wire"/></svg></button><svg class="a"><use href="#down"/></svg><span class="bar"></span>
      </div>
      <div class="tools gfx two">
        <button class="press wide" aria-label="场景光"><svg class="i"><use href="#horn"/></svg><svg class="a"><use href="#down"/></svg></button>
        <button aria-label="透明"><svg class="i"><use href="#box"/></svg></button><button aria-label="线框"><svg class="i"><use href="#boxw"/></svg></button>
        <button class="press" aria-label="坐标轴"><svg class="i"><use href="#axes"/></svg></button><button class="press" aria-label="栅格"><svg class="i"><use href="#grid"/></svg></button><span class="bar"></span>
        <button aria-label="无颜色"><svg class="i"><use href="#nocolor"/></svg></button><button aria-label="颜色"><svg class="i"><use href="#palette"/></svg></button><svg class="a"><use href="#down"/></svg><span class="bar"></span>
        <button aria-label="环境"><svg class="i"><use href="#shutter"/></svg></button><svg class="a"><use href="#down"/></svg>
        <button aria-label="截图"><svg class="i"><use href="#camera"/></svg></button><button aria-label="打印"><svg class="i"><use href="#print"/></svg></button>
      </div>
      <div class="view3d">
        <svg class="scene" viewBox="1252 218 664 429" preserveAspectRatio="xMinYMin meet">
          <defs>
            <linearGradient id="disk"><stop offset="0" stop-color="#ffd93a"/><stop offset=".28" stop-color="#ffe84a"/><stop offset=".48" stop-color="#e8bd35"/><stop offset=".8" stop-color="#cdb03a"/><stop offset=".92" stop-color="#a88a1c"/><stop offset="1" stop-color="#dcb030"/></linearGradient>
          </defs>
          <g transform="translate(1298 358) scale(.33333)" stroke-linejoin="round">
            <path d="M303 256L945 106M355 188l28 124M868 69l28 121M612 129v12M319 321l640-150M330 435l647-165M321 452l641-152M250 247l43 187M256 227l43 190M265 217l38 168M256 296l22-33M275 361l18-32M288 418l12-22M388 437l9-20M643 377l10-23M900 315l9-20" fill="none" stroke="#66717f" stroke-width="3"/>
            <g stroke="#c48a17" stroke-width="3">
              <path d="M300 366l20-40 641-148-20 40z" fill="#cbb244"/>
              <path d="M300 366l641-148 14 64-640 150z" fill="#f0d256"/>
              <path d="M941 218l20-40 14 64-20 40z" fill="#d2b03a"/>
              <path d="M460 270c10-22 300-86 322-73l7 40c-10 22-300 80-320 73z" fill="url(#disk)"/>
              <path d="M460 270c20 8 300-52 322-73-20-16-312 44-322 73z" fill="#cfb543"/>
              <path d="M616 240l8 44" fill="none"/>
              <path d="M499 231c20-14 210-60 230-56l4 22c-20 16-210 60-230 53z" fill="url(#disk)"/>
              <path d="M499 231c30 4 210-36 230-56M530 226l3 22M608 205l6 26M693 186l4 20M716 178l4 20" fill="none"/>
              <path d="M442 190c6-20 300-90 322-78l7 38c-6 20-306 88-323 78z" fill="url(#disk)"/>
              <path d="M442 190c14 12 306-56 322-78-20-14-314 52-322 78z" fill="#cab141"/>
              <path d="M598 161l6 42" fill="none"/>
            </g>
          </g>
          <g class="axis"><text x="1328" y="413">mm</text><text x="1368" y="431">0</text><text x="1368" y="468">0</text><text x="1331" y="488">mm</text><text x="1373" y="490">5</text><text x="1370" y="511">10</text><text x="1422" y="526">-20</text><text x="1512" y="506">0</text><text x="1595" y="486">20</text><text x="1512" y="534">mm</text><text x="1329" y="596">y</text><text x="1300" y="641">z</text><text x="1292" y="603" class="xax">x</text></g>
          <path d="M1297 602l20-5" stroke="#4d9d52" stroke-width="2"/><path d="M1315 594l9 2-8 4z" fill="#4d9d52"/>
          <path d="M1297 602l4 20" stroke="#3c7ba6" stroke-width="2"/><path d="M1298 621l6-1-1 10z" fill="#3c7ba6"/><circle cx="1297" cy="602" r="2" fill="#b33"/>
        </svg>
        <svg class="badge"><use href="#logo"/></svg>
      </div>
    </section>

    <section class="panel results">
      <div class="rtabs">
        <button>消息 <span>×</span></button><button>进度</button><button>日志</button><button>表格 1 <span>×</span></button><button>查找结果 <span>×</span></button><button class="on">查找结果 <span>×</span></button>
        <svg class="a"><use href="#down"/></svg><svg class="pin"><use href="#pin"/></svg>
      </div>
      <div class="rbar"><svg class="i"><use href="#refresh"/></svg><svg class="i"><use href="#tablenew"/></svg><span>"洛伦兹": 15 个匹配项</span></div>
      <div class="found">
        <div class="clip">
        <table>
          <colgroup><col class="w239"><col class="w79"><col></colgroup>
          <thead><tr><th>节点</th><th>类型</th><th>文本</th></tr></thead>
          <tbody>
          <tr><td>方程视图</td><td>表格单元格</td><td>洛伦兹力贡献，x 分量</td></tr>
          <tr><td>方程视图</td><td>表格单元格</td><td>洛伦兹力贡献，y 分量</td></tr>
          <tr><td>方程视图</td><td>表格单元格</td><td>洛伦兹力贡献，z 分量</td></tr>
          <tr><td>方程视图</td><td>表格单元格</td><td>洛伦兹力贡献，瞬时值，x 分量</td></tr>
          <tr><td>方程视图</td><td>表格单元格</td><td>洛伦兹力贡献，瞬时值，y 分量</td></tr>
          <tr><td>方程视图</td><td>表格单元格</td><td>洛伦兹力贡献，瞬时值，z 分量</td></tr>
          <tr><td>速度（洛伦兹项） 1</td><td>节点</td><td>速度（洛伦兹项） 1</td></tr>
          <tr><td>速度（洛伦兹项） 1</td><td>节点</td><td>速度（洛伦兹项)</td></tr>
          <tr><td>方程视图</td><td>表格单元格</td><td>洛伦兹力贡献，x 分量</td></tr>
          <tr><td>方程视图</td><td>表格单元格</td><td>洛伦兹力贡献，y 分量</td></tr>
          <tr><td>方程视图</td><td>表格单元格</td><td>洛伦兹力贡献，z 分量</td></tr>
          <tr><td>方程视图</td><td>表格单元格</td><td>洛伦兹力贡献，瞬时值，x 分量</td></tr>
          <tr><td>方程视图</td><td>表格单元格</td><td>洛伦兹力贡献，瞬时值，y 分量</td></tr>
          </tbody>
        </table>
        </div>
        <div class="sb long"><svg><use href="#chev-up"/></svg><span></span><svg><use href="#chev-down"/></svg></div>
        <em class="mark mark-found"></em>
        <p class="water">知乎 @丁二</p>
      </div>
    </section>
  </div>
</main>

<footer class="status">1.16 GB | 1.25 GB</footer>
<div class="taskbar"><span class="tb-search"></span><span class="tb-gap"></span><span class="tb-app"></span><span class="tb-rest"></span><span class="tb-txt">6/15</span><span class="tb-txt">8:47</span></div>

<div class="dialog" role="dialog" aria-label="查找">
  <div class="dtitle"><svg class="i"><use href="#find"/></svg><span>查找</span><button aria-label="关闭对话框"><svg viewBox="0 0 12 12"><path d="M1 1l10 10M11 1L1 11" stroke="#222" stroke-width="1.200"/></svg></button></div>
  <div class="dtabs"><button class="on">全部</button><button>方法</button><button>高级</button></div>
  <div class="dbody">
    <div class="frow"><label for="q">查找:</label><input id="q" type="text" value="洛伦兹"></div>
    <fieldset><legend>选项</legend>
      <label><input type="checkbox">精确匹配</label>
      <label><input type="checkbox">正则表达式</label>
      <label><input type="checkbox">区分大小写</label>
    </fieldset>
    <button class="push focus">查找</button>
    <em class="mark mark-find"></em>
  </div>
  <button class="push close">关闭</button>
</div>
</body>
</html>
```
FILE: styles.css
```css
* { box-sizing: border-box; }
body {
  margin: 0; height: 100vh; display: flex; flex-direction: column; overflow: hidden; position: relative;
  background: #fafbff; color: #111;
  font: 12px/16px "Open Sans", "Noto Sans CJK SC", sans-serif;
}
h1, h2, h3, h4, p, ul { margin: 0; padding: 0; font-weight: 400; }
button { font: inherit; color: inherit; background: none; border: 0; padding: 0; }
.sprite { position: absolute; width: 0; height: 0; }
.i { width: 16px; height: 16px; flex: none; display: block; }
.a { width: 8px; height: 8px; flex: none; color: #3c3f44; }
.pin { width: 8px; height: 12px; flex: none; color: #4a4d52; }
.bar { width: 1px; height: 18px; background: #c8ccd2; flex: none; }
.blue { color: #3b88bd; }
.grey { color: #b9bcc2; }
.mark { position: absolute; border: 3px solid #d9302a; border-radius: 3px; z-index: 5; pointer-events: none; }

/* title bar */
.titlebar { height: 22px; flex: none; display: flex; align-items: flex-start; background: #fff; }
.quick { display: flex; align-items: center; height: 20px; padding-left: 1px; }
.quick .bar { height: 14px; margin: 0 4px 0 8px; }
.quick .bar:last-child { margin: 0 0 0 7px; }
.quick button { width: 24px; display: grid; place-items: center; }
.titlebar h1 { flex: 1; text-align: center; font-size: 12px; line-height: 18px; padding-left: 100px; }
.winbtns { display: flex; height: 16px; margin-right: 4px; }
.winbtns button { width: 45px; display: grid; place-items: center; }
.winbtns svg { width: 12px; height: 12px; }

/* ribbon */
.tabs { height: 24px; flex: none; margin: 0 3px; display: flex; background: #ebecee; position: relative; padding-left: 1px; }
.tabs button { padding: 0 10px 0; line-height: 26px; }
.tabs .file { background: #3387c8; color: #fff; padding: 0 16px; margin-right: -1px; }
.tabs .on { background: #fafbff; color: #3182c0; padding: 0 10px; }
.tabs .help { margin: 3px 3px 0 auto; height: 16px; width: 16px; padding: 0; line-height: 16px; background: #3387c8; color: #fff; font-size: 13px; border-radius: 1px; }
.ribbon { height: 90px; flex: none; margin: 0 3px 5px; border: 1px solid #cdd0d6; border-top: 0; display: flex; }
.group { display: flex; flex-direction: column; border-right: 1px solid #d6d9df; margin: 8px 0 6px; flex: none; }
.group p { text-align: center; color: #6c6f74; line-height: 16px; margin-bottom: -6px; }
.cmds { display: flex; justify-content: center; flex: 1; gap: 8px; padding-left: 3px; }
.cmd { display: flex; flex-direction: column; align-items: center; line-height: 13px; white-space: nowrap; }
.pic { width: 28px; height: 30px; margin-bottom: 3px; }
.pic.small { width: 20px; }
.cmd .a { width: 7px; height: 7px; color: #111; }
.glyph-a { color: #1f9f7c; font: 28px/30px Roboto, sans-serif; }
.glyph-p { color: #3f93c6; font: 20px/26px Roboto, sans-serif; }
.glyph-p sub, .sym sub { font-size: 80%; vertical-align: -3px; line-height: 0; }
.stack { display: flex; flex-direction: column; line-height: 16px; gap: 6px; margin-top: -2px; }
.stack button { display: flex; align-items: center; gap: 2px; }
.stack .a { margin-left: 2px; width: 7px; color: #111; }
.stack .sym { width: 16px; }
.sym { color: #3f93c6; font: 14px/16px Roboto, sans-serif; }
.sym.fx { font-size: 10px; }
.off { color: #aeb1b6; }
.off .sym { opacity: .6; font-size: 12px; text-align: center; }
.g-app { width: 57px; }
.g-model { width: 113px; }
.g-def { width: 132px; }
.g-def .cmds { gap: 12px; padding-left: 8px; }
.g-geom { width: 147px; }
.g-geom .cmds { gap: 6px; }
.g-mat { width: 68px; }
.g-phys { width: 147px; }
.g-phys .cmds { gap: 6px; }
.g-mesh { width: 112px; }
.g-study { width: 155px; }
.g-study .cmds { gap: 12px; padding-left: 8px; }
.g-res { width: 131px; }
.g-lay { width: 113px; }
.g-lay .cmds { gap: 11px; padding-left: 8px; }

/* desktop */
.desk { flex: 1; min-height: 0; margin: 0 3px; display: grid; grid-template-columns: 270fr 969fr 666fr; gap: 5px; }
.panel { border: 1px solid #c9ced8; background: #fafbff; display: flex; flex-direction: column; min-height: 0; min-width: 0; }
.phead { display: flex; align-items: center; height: 31px; padding: 2px 4px 0 7px; gap: 8px; flex: none; }
.phead .a { width: 9px; }
.phead h2 { flex: 1; color: #41618f; font-size: 21px; line-height: 28px; font-weight: 300; }
.tools { display: flex; align-items: center; flex: none; }
.tools button { width: 23px; height: 18px; display: grid; place-items: center; }
.nav { height: 24px; padding: 0 0 2px 3px; }
.nav .a { margin-left: 4px; }

.tree { list-style: none; margin: 0 4px 8px; flex: 1; border: 1px solid #c9ced8; background: #fff; min-height: 0; }
.tree li { display: flex; align-items: center; height: 20px; white-space: nowrap; position: relative; }
.tree li > span { margin-left: 5px; }
.tree i { margin-left: 4px; }
.x { width: 9px; height: 10px; margin-right: 7px; flex: none; }
.l0 { padding-left: 5px; }
.l1 { padding-left: 25px; }
.l2 { padding-left: 45px; }
.l3 { padding-left: 65px; }
.l4 { padding-left: 85px; }
.sel { background: #d9dadd; }
.tree .sym { font-size: 13px; font-weight: 400; white-space: nowrap; text-align: center; }
.tree .du { font-size: 10px; font-style: italic; }
.tree .eq { display: flex; align-items: center; font: 9px/8px "Open Sans", sans-serif; color: #3b6f9f; }
.mark-node { left: 73px; top: -20px; width: 131px; height: 43px; }

/* settings */
.settings h3 { color: #4a6a99; font-size: 14px; line-height: 26px; padding-left: 7px; }
.mini { height: 20px; padding: 0 0 6px 2px; }
.mini .i { width: 14px; height: 14px; }
.scroller { flex: 1; min-height: 0; display: flex; overflow: hidden; }
.form { flex: 1; min-width: 0; display: flex; flex-direction: column; margin-top: -7px; }
.form h4 { height: 27px; flex: none; background: #dde8f6; font-size: 13px; line-height: 26px; display: flex; align-items: center; gap: 12px; padding-left: 5px; }
.form h4 .a { width: 9px; }
.body { padding: 9px 5px 0; flex: none; display: flex; flex-direction: column; }
.body.study { padding: 10px 5px 11px; gap: 6px; }
.combo { display: grid; align-items: center; }
.combo select, .combo .a { grid-area: 1 / 1; }
.combo .a { justify-self: end; margin-right: 5px; color: #222; }
.combo select { appearance: none; width: 100%; height: 21px; border: 1px solid #cfd1d6; background: #ececee; font: inherit; padding: 0 12px; color: #111; }
.gridbox { display: flex; position: relative; border: 1px solid #c9ccd2; border-bottom: 2px solid #d0d1d4; background: #fff; }
table { flex: 1; border-collapse: separate; border-spacing: 0; table-layout: fixed; width: 100%; }
th, td { height: 20px; padding: 0 4px 0 3px; text-align: left; font-weight: 400; white-space: nowrap; overflow: hidden; line-height: 16px; }
.gridbox td { background: #efeff0; border-right: 1px solid #a2a3a6; border-bottom: 1px solid #a2a3a6; }
.gridbox td.w { background: #fff; }
.gridbox td.cur { background: #e6eefa; border: 1px solid #86a9cf; }
th { height: 28px; background: #efeff0; border-right: 1px solid #a2a3a6; padding: 6px 5px 0; }
th.nb { border-right-color: #efeff0; }
.gridbox tr:last-child td { border-bottom: 0; height: 18px; }
th.ff { padding: 0 4px; vertical-align: top; }
th.ff svg { width: 9px; height: 7px; display: inline-block; vertical-align: top; margin: 4px 6px 0 0; }
.shape th.ff { vertical-align: middle; padding: 6px 4px 0; }
.shape th.ff svg { margin-top: -3px; margin-right: 5px; }
.tall { height: 130px; border-bottom-width: 1px; align-items: flex-start; }
.gridbox.tall tr:last-child td { border-bottom: 1px solid #a2a3a6; height: 20px; }
.under { height: 38px; padding: 0 0 4px 1px; }
.under .i { width: 15px; height: 15px; }
.under .a { margin-left: 1px; }
.faint { color: #a9abb0; }
.w31 { width: 31px; }
.w65 { width: 65px; }
.w67 { width: 67px; }
.w68 { width: 68px; }
.w79 { width: 79px; }
.w93 { width: 93px; }
.w98 { width: 98px; }
.w102 { width: 102px; }
.w103 { width: 103px; }
.w130 { width: 130px; }
.w147 { width: 147px; }
.w230 { width: 230px; }
.w239 { width: 239px; }
.w263 { width: 263px; }
.w271 { width: 271px; }
.w466 { width: 466px; }
.mark-vars { left: 11px; top: 184px; width: 454px; height: 47px; }

.sb { width: 18px; flex: none; display: flex; flex-direction: column; align-items: center; padding: 3px 0; background: #fdfdff; }
.sb svg { width: 9px; height: 9px; flex: none; }
.sb span { width: 100%; background: #e6e7e9; }
.gridbox .sb { padding-top: 31px; }
.low { justify-content: flex-end; gap: 8px; }
.low svg:first-child { margin-bottom: auto; }
.low span { height: 8px; }
.high span { height: 26px; margin: 6px 0 auto; }
.main { width: 17px; }
.main span { height: 527px; margin: 37px 0 auto; }

/* right column */
.rightcol { display: flex; flex-direction: column; gap: 5px; min-height: 0; min-width: 0; }
.graphics { height: 507px; flex: none; }
.gfx { height: 22px; padding-left: 3px; }
.gfx > .a { margin: 0 6px 0 2px; width: 9px; }
.gfx .bar { margin: 0 4px; height: 16px; }
.gfx .press { width: 19px; height: 18px; margin: 0 2px; border: 1px solid #3c5a7c; border-radius: 2px; background: #b9d5ef; }
.gfx .press .i { width: 14px; height: 14px; }
.gfx .wide { width: 36px; display: flex; align-items: center; justify-content: space-around; }
.two { padding: 0 0 4px 5px; }
.pl { position: relative; }
.pl span { position: absolute; left: 8px; top: 0; font-size: 10px; line-height: 12px; color: #70757a; }
.view3d { flex: 1; border-top: 1px solid #6a6d72; border-left: 1px solid #6a6d72; background: linear-gradient(#fbfbff, #f2f5ff 45%, #e3f0fe); position: relative; min-height: 0; }
.scene { width: 100%; height: 100%; display: block; }
.axis { font: 12px "DejaVu Sans", sans-serif; fill: #22262c; }
.xax { fill: #9c2030; font-size: 10px; }
.badge { position: absolute; right: 7px; top: 6px; width: 16px; height: 16px; }
.results { flex: 1; }
.rtabs { height: 31px; padding: 6px 4px 0 4px; display: flex; align-items: stretch; flex: none; border-bottom: 1px solid #c9ced8; }
.rtabs button { background: #ebebed; padding: 0 4px; margin-right: 8px; white-space: nowrap; line-height: 22px; font-size: 13px; }
.rtabs span { display: inline-block; width: 12px; color: #c5c8cd; font-size: 19px; margin: 0 3px 0 2px; vertical-align: -2px; line-height: 16px; text-align: center; }
.rtabs .on { background: #fafbff; color: #2f87c9; border: 1px solid #c9ced8; border-bottom: 0; margin-bottom: -1px; }
.rtabs .on span { color: #2f87c9; }
.rtabs .a { margin: 10px 8px 0 auto; color: #2f7fb8; }
.rtabs .pin { margin-top: 9px; color: #2f7fb8; }
.rbar { display: flex; align-items: center; height: 36px; gap: 8px; padding: 4px 0 0 11px; flex: none; }
.rbar .i { width: 15px; height: 15px; }
.rbar span { margin-left: 4px; }
.found { flex: 1; min-height: 0; margin: 0 5px 8px; border: 1px solid #c9ccd2; display: flex; position: relative; background: #fff; }
.clip { flex: 1; min-width: 0; overflow: hidden; }
.found td { border-right: 1px solid #a2a3a6; border-bottom: 1px solid #a2a3a6; padding: 0 1px; }
.found th { padding: 6px 4px 0; }
.found td:last-child, .found th:last-child { border-right: 0; }
.long { padding-top: 30px; }
.long span { flex: 1; margin: 8px 0 60px; }
.mark-found { left: 311px; top: 15px; width: 166px; height: 80px; }
.water { position: absolute; left: 310px; bottom: -2px; font: 58px/64px "Noto Sans CJK SC", sans-serif; font-weight: 300; color: #fff; text-shadow: 2px 2px 0 #8b8e93; white-space: nowrap; }

.status { height: 34px; flex: none; padding: 14px 0 0 65.5%; }
.taskbar { height: 8px; flex: none; display: flex; background: linear-gradient(90deg, #cfe5ee 40%, #d3def0 80%, #d8dbee); overflow: hidden; }
.tb-search { margin-left: 49px; width: 343px; background: #fff; border-top: 1px solid #c9ced2; }
.tb-gap { width: 246px; }
.tb-app { width: 44px; background: #e9f4f9; }
.tb-rest { flex: 1; }
.tb-txt { padding-top: 3px; width: 70px; margin-right: 144px; }
.tb-txt:last-child { margin-right: 22px; }

/* find dialog */
.dialog { position: absolute; left: 813px; top: 339px; width: 295px; height: 356px; border: 1px solid #5f6165; background: #fafbff; box-shadow: 0 4px 14px rgba(0, 0, 0, .4); display: flex; flex-direction: column; padding: 0 10px 6px; z-index: 10; }
.dtitle { height: 30px; margin: 0 -10px 8px; padding: 0 9px 0 8px; display: flex; align-items: center; gap: 6px; background: #fff; }
.dtitle span { flex: 1; }
.dtitle button { width: 12px; height: 12px; display: grid; }
.dtabs { display: flex; align-items: flex-end; height: 25px; }
.dtabs button { border: 1px solid #d4d6dc; border-bottom: 0; border-left: 0; background: #f0f0f3; height: 23px; width: 38px; line-height: 24px; }
.dtabs .on { height: 26px; width: 41px; line-height: 22px; background: #fafbff; margin-bottom: -1px; border-left: 1px solid #d4d6dc; z-index: 1; }
.dbody { flex: 1; border: 1px solid #d4d6dc; padding: 4px 5px 0; position: relative; display: flex; flex-direction: column; }
.frow { display: flex; align-items: center; gap: 10px; padding: 0 2px; height: 22px; }
.frow input { flex: 1; min-width: 0; height: 21px; border: 1px solid #d0d2d8; font: inherit; padding: 0 2px; background: #fff; color: #111; }
fieldset { margin: 7px 0 0; border: 1px solid #d4d6dc; padding: 3px 9px 5px; display: flex; flex-direction: column; height: 88px; }
legend { padding: 0 2px; margin-left: -4px; line-height: 16px; }
fieldset label { display: flex; align-items: center; gap: 5px; height: 22px; }
fieldset input { appearance: none; width: 14px; height: 14px; margin: 0; border: 1px solid #707276; background: #f2f2f4; }
.push { width: 60px; height: 22px; border: 1px solid #cfd1d6; background: #ededef; }
.push.focus { border-color: #6aa7d8; outline: 1px dashed #333c55; outline-offset: -3px; align-self: flex-end; margin-top: 4px; }
.push.close { align-self: flex-end; margin: 5px 3px 0 0; }
.mark-find { left: 29px; top: 0; width: 198px; height: 34px; }
```
